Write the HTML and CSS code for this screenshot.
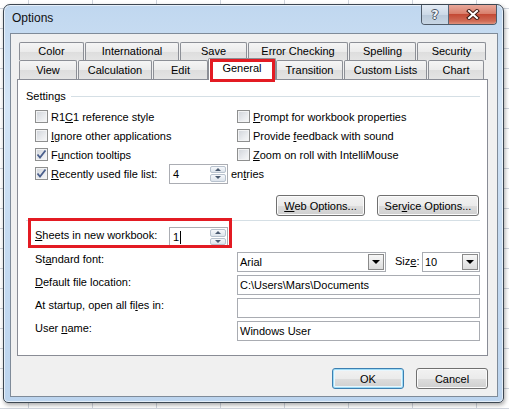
FILE: index.html
```html
<!DOCTYPE html>
<html lang="en">
<head>
    <meta charset="UTF-8">
    <meta name="viewport" content="width=device-width, initial-scale=1.0">
    <title>Options</title>
    <link rel="stylesheet" href="styles.css">
</head>
<body>

<div class="dialog">
    <div class="titlebar">
        <span class="title">Options</span>
        <div class="caption">
            <div class="cap-btn cap-help">?</div>
            <div class="cap-btn cap-close">
                <svg width="14" height="11" viewBox="0 0 14 11">
                    <path d="M3 2 L11 9 M11 2 L3 9" stroke="#3e1a14" stroke-width="4" stroke-linecap="square"/>
                    <path d="M3 2 L11 9 M11 2 L3 9" stroke="#ffffff" stroke-width="2" stroke-linecap="square"/>
                </svg>
            </div>
        </div>
    </div>

    <div class="client">
        <div class="tabs">
            <div class="tab-row back">
                <div class="tab">Color</div>
                <div class="tab">International</div>
                <div class="tab">Save</div>
                <div class="tab">Error Checking</div>
                <div class="tab">Spelling</div>
                <div class="tab">Security</div>
            </div>
            <div class="tab-row front">
                <div class="tab">View</div>
                <div class="tab">Calculation</div>
                <div class="tab">Edit</div>
                <div class="tab active">General</div>
                <div class="tab">Transition</div>
                <div class="tab">Custom Lists</div>
                <div class="tab">Chart</div>
            </div>
        </div>

        <div class="panel">
            <div class="group-title">Settings</div>

            <div class="checks">
                <div class="check"><span class="box"></span><span>R1<u>C</u>1 reference style</span></div>
                <div class="check"><span class="box"></span><span><u>P</u>rompt for workbook properties</span></div>
                <div class="check"><span class="box"></span><span><u>I</u>gnore other applications</span></div>
                <div class="check"><span class="box"></span><span>Provide <u>f</u>eedback with sound</span></div>
                <div class="check">
                    <span class="box"><svg width="11" height="11" viewBox="0 0 11 11"><path d="M1.5 5.5 L4 8.5 L9.5 1.5" fill="none" stroke="#4a5f8c" stroke-width="1.8"/></svg></span>
                    <span>F<u>u</u>nction tooltips</span>
                </div>
                <div class="check"><span class="box"></span><span><u>Z</u>oom on roll with IntelliMouse</span></div>
                <div class="check recent">
                    <span class="box"><svg width="11" height="11" viewBox="0 0 11 11"><path d="M1.5 5.5 L4 8.5 L9.5 1.5" fill="none" stroke="#4a5f8c" stroke-width="1.8"/></svg></span>
                    <span class="recent-label"><u>R</u>ecently used file list:</span>
                    <div class="spinner">
                        <span class="value">4</span>
                        <div class="arrows"><span class="up"></span><span class="down"></span></div>
                    </div>
                    <span class="after">en<u>t</u>ries</span>
                </div>
            </div>

            <div class="btn-row">
                <button class="btn web"><u>W</u>eb Options...</button>
                <button class="btn service">Ser<u>v</u>ice Options...</button>
            </div>

            <div class="separator"></div>

            <div class="form-row sheets">
                <span class="label short"><u>S</u>heets in new workbook:</span>
                <div class="spinner">
                    <span class="value">1<span class="caret"></span></span>
                    <div class="arrows"><span class="up"></span><span class="down"></span></div>
                </div>
            </div>

            <div class="form-row font-row">
                <span class="label">St<u>a</u>ndard font:</span>
                <div class="combo font-combo">
                    <span class="value">Arial</span>
                    <span class="drop"></span>
                </div>
                <span class="size-label">Siz<u>e</u>:</span>
                <div class="combo size-combo">
                    <span class="value">10</span>
                    <span class="drop"></span>
                </div>
            </div>

            <div class="form-row">
                <span class="label"><u>D</u>efault file location:</span>
                <div class="textbox">C:\Users\Mars\Documents</div>
            </div>

            <div class="form-row">
                <span class="label">At startup, open all fi<u>l</u>es in:</span>
                <div class="textbox"></div>
            </div>

            <div class="form-row">
                <span class="label">User <u>n</u>ame:</span>
                <div class="textbox">Windows User</div>
            </div>
        </div>

        <div class="actions">
            <button class="btn default">OK</button>
            <button class="btn">Cancel</button>
        </div>
    </div>
</div>

</body>
</html>
```

FILE: styles.css
```css
body {
    margin: 0;
    padding: 4px 0 0 3px;
    height: 409px;
    box-sizing: border-box;
    overflow: hidden;
    font-family: "Liberation Sans", Arial, sans-serif;
    font-size: 11px;
    color: #000;
    background-color: #ffffff;
    /* spreadsheet grid behind the dialog */
    background-image:
        linear-gradient(to right, #d0d5dd 1px, transparent 1px),
        linear-gradient(to bottom, #d0d5dd 1px, transparent 1px);
    background-size: 64px 20px;
    background-position: 28px 0, 0 8px;
}

/* window frame */
.dialog {
    width: 501px;
    height: 399px;
    box-sizing: border-box;
    border: 1px solid #3d4752;
    border-radius: 7px 7px 5px 5px;
    padding: 0 5px 5px 6px;
    background: linear-gradient(to bottom, #c0d7ef 0%, #d4e5f6 25%, #c6dbf1 55%, #bcd4ee 100%);
    box-shadow: 1px 2px 4px rgba(0, 0, 0, 0.35), inset 0 0 0 1px rgba(255, 255, 255, 0.6);
    display: flex;
    flex-direction: column;
}
.titlebar {
    height: 28px;
    display: flex;
    align-items: flex-start;
}
.title {
    font-size: 12px;
    line-height: 14px;
    margin: 6px 0 0 2px;
    color: #101010;
}
.caption {
    margin: 0 1px 0 auto;
    display: flex;
    height: 19px;
    border: 1px solid #4f5b69;
    border-top: none;
    border-radius: 0 0 4px 4px;
    overflow: hidden;
}
.cap-btn {
    display: flex;
    align-items: center;
    justify-content: center;
}
.cap-help {
    width: 26px;
    border-right: 1px solid #5a6676;
    background: linear-gradient(to bottom, #e3ebf4 0%, #ccd9e7 50%, #b9c9da 51%, #c8d6e4 100%);
    font-family: "DejaVu Sans", sans-serif;
    font-weight: bold;
    font-size: 12px;
    color: #f4f6f9;
    text-shadow: 1px 0 0 #4a5464, -1px 0 0 #4a5464, 0 1px 0 #4a5464, 0 -1px 0 #4a5464;
}
.cap-close {
    width: 47px;
    background: linear-gradient(to bottom, #e9a99b 0%, #d9806d 45%, #c44a35 50%, #cf6b56 85%, #e0917c 100%);
}

/* client area */
.client {
    flex: 1;
    border: 1px solid #7f8b99;
    background: #f0f0f0;
    padding: 8px 9px 7px 6px;
    display: flex;
    flex-direction: column;
}

/* tabs */
.tabs {
    margin: 0 2px;
}
.tab-row {
    display: flex;
    align-items: flex-end;
    gap: 1px;
}
.tab-row.back {
    height: 18px;
}
.tab-row.front {
    height: 19px;
}
.tab {
    height: 100%;
    box-sizing: border-box;
    border: 1px solid #8c8f96;
    border-bottom: none;
    border-radius: 2px 2px 0 0;
    background: linear-gradient(to bottom, #f5f5f5 0%, #ebebeb 50%, #dddddd 51%, #e4e4e4 100%);
    text-align: center;
    white-space: nowrap;
}
.back .tab {
    line-height: 17px;
}
.front .tab {
    line-height: 18px;
}
.back .tab:nth-child(1) { width: 65px; }
.back .tab:nth-child(2) { width: 94px; }
.back .tab:nth-child(3) { width: 67px; }
.back .tab:nth-child(4) { width: 100px; }
.back .tab:nth-child(5) { width: 67px; }
.back .tab:nth-child(6) { width: 69px; }
.front .tab:nth-child(1) { width: 58px; }
.front .tab:nth-child(2) { width: 74px; }
.front .tab:nth-child(3) { width: 55px; }
.front .tab:nth-child(4) { width: 68px; }
.front .tab:nth-child(5) { width: 67px; }
.front .tab:nth-child(6) { width: 83px; }
.front .tab:nth-child(7) { width: 56px; }
.tab.active {
    position: relative;
    z-index: 2;
    height: 22px;
    margin: -2px -1px -1px -1px;
    background: #ffffff;
    line-height: 19px;
}
.tab.active::after {
    content: "";
    position: absolute;
    left: 1px;
    right: 0;
    top: 0;
    bottom: -2px;
    border: 3px solid #e31b23;
}

/* tab page */
.panel {
    height: 277px;
    box-sizing: border-box;
    border: 1px solid #898c95;
    background: #ffffff;
    padding: 9px 7px 0 8px;
}
.group-title {
    display: flex;
    align-items: center;
    height: 14px;
    line-height: 14px;
}
.group-title::after {
    content: "";
    flex: 1;
    border-top: 1px solid #d5dfe5;
    margin-left: 5px;
}
.checks {
    display: grid;
    grid-template-columns: 202px auto;
    grid-auto-rows: 19px;
    margin-top: 4px;
    padding-left: 9px;
}
.check {
    display: flex;
    align-items: center;
    gap: 3px;
    white-space: nowrap;
}
.box {
    width: 13px;
    height: 13px;
    box-sizing: border-box;
    border: 1px solid #8e8f8f;
    background: linear-gradient(135deg, #cfd3d9 0%, #e9ebee 60%, #f8f8f8 100%);
    box-shadow: inset 0 0 0 1px #f2f3f4;
    display: flex;
    align-items: center;
    justify-content: center;
    flex-shrink: 0;
}
.recent {
    grid-column: 1 / -1;
}
.recent-label {
    width: 115px;
}
.after {
    margin-left: 0;
}

/* spin box */
.spinner {
    width: 59px;
    height: 20px;
    box-sizing: border-box;
    border: 1px solid #abadb3;
    background: #ffffff;
    display: flex;
}
.spinner .value {
    flex: 1;
    padding-left: 3px;
    line-height: 18px;
    display: flex;
    align-items: center;
}
.caret {
    display: inline-block;
    width: 1px;
    height: 13px;
    background: #000;
    margin-left: 1px;
}
.arrows {
    width: 16px;
    display: flex;
    flex-direction: column;
    gap: 1px;
    padding: 1px 1px 1px 0;
}
.arrows span {
    flex: 1;
    border: 1px solid #b8c2ce;
    border-radius: 2px;
    background: linear-gradient(to bottom, #f6f8fb, #dde4ec);
    display: flex;
    align-items: center;
    justify-content: center;
}
.arrows .up::before {
    content: "";
    border-left: 3px solid transparent;
    border-right: 3px solid transparent;
    border-bottom: 3px solid #4a5a70;
}
.arrows .down::before {
    content: "";
    border-left: 3px solid transparent;
    border-right: 3px solid transparent;
    border-top: 3px solid #4a5a70;
}

/* push buttons */
.btn {
    height: 21px;
    box-sizing: border-box;
    padding: 0;
    font-family: inherit;
    font-size: 11px;
    color: #000;
    border: 1px solid #707070;
    border-radius: 3px;
    background: linear-gradient(to bottom, #f2f2f2 0%, #ebebeb 50%, #dddddd 51%, #cfcfcf 100%);
    box-shadow: inset 0 0 0 1px #fbfbfb;
}
.btn-row {
    display: flex;
    justify-content: flex-end;
    gap: 12px;
    margin-top: 12px;
    padding-right: 1px;
}
.btn.web {
    width: 89px;
}
.btn.service {
    width: 102px;
}
.separator {
    margin-top: 4px;
    border-top: 1px solid #d5dfe5;
}

/* label + field rows */
.form-row {
    display: flex;
    align-items: flex-start;
    height: 20px;
    margin-top: 3px;
    padding-left: 9px;
}
.label {
    width: 202px;
    line-height: 14px;
    white-space: nowrap;
}
.label.short {
    width: 134px;
    padding-top: 1px;
}
.form-row.sheets {
    position: relative;
    margin-top: 6px;
}
.form-row.sheets::before {
    content: "";
    position: absolute;
    left: 2px;
    top: -9px;
    width: 204px;
    height: 30px;
    box-sizing: border-box;
    border: 3px solid #e31b23;
}
.form-row.font-row {
    margin-top: 5px;
}
.textbox,
.combo {
    height: 20px;
    box-sizing: border-box;
    border: 1px solid #a9acb2;
    background: #ffffff;
    padding-left: 2px;
    line-height: 18px;
    white-space: nowrap;
}
.textbox {
    flex: 1;
}
.combo {
    display: flex;
}
.combo .value {
    flex: 1;
}
.font-combo {
    width: 149px;
}
.size-combo {
    width: 58px;
}
.size-label {
    width: 27px;
    margin-left: 9px;
    line-height: 18px;
}
.drop {
    width: 16px;
    margin: 1px;
    box-sizing: border-box;
    border: 1px solid #8a8a8a;
    background: linear-gradient(to bottom, #f7f7f7, #dcdcdc);
    display: flex;
    align-items: center;
    justify-content: center;
}
.drop::before {
    content: "";
    border-left: 4px solid transparent;
    border-right: 4px solid transparent;
    border-top: 4px solid #000;
}

/* OK / Cancel */
.actions {
    display: flex;
    justify-content: flex-end;
    gap: 12px;
    margin-top: 12px;
}
.actions .btn {
    width: 72px;
}
.btn.default {
    border-color: #3c7fb1;
    box-shadow: inset 0 0 0 1px #9fdcf6, inset 0 0 0 2px #e8f6fd;
}
```
